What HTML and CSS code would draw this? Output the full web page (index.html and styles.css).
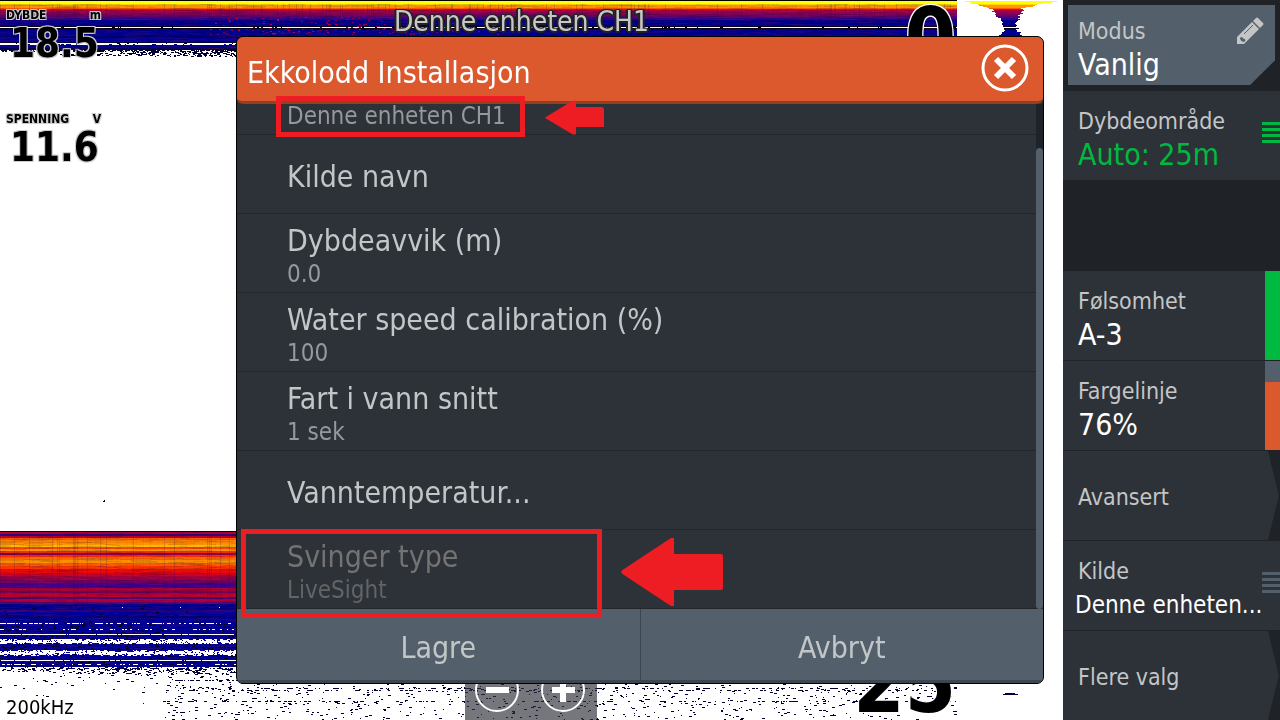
FILE: index.html
```
<!DOCTYPE html>
<html lang="nb">
<head>
  <meta charset="UTF-8">
  <meta name="viewport" content="width=device-width, initial-scale=1.0">
  <title>Ekkolodd Installasjon</title>
  <link rel="stylesheet" href="styles.css">
</head>
<body>
  <main class="sonar">
    <canvas class="echo" id="echo"></canvas>
    <h1 class="sonar-title">Denne enheten CH1</h1>
    <div class="readouts">
      <div class="readout">
        <div class="readout-head"><span>DYBDE</span><span>m</span></div>
        <div class="readout-value">18.5</div>
      </div>
      <div class="readout">
        <div class="readout-head"><span>SPENNING</span><span>V</span></div>
        <div class="readout-value">11.6</div>
      </div>
    </div>
    <div class="range range-top">0</div>
    <div class="range range-bottom">25</div>
    <div class="frequency">200kHz</div>
    <div class="zoom-bar">
      <button type="button" aria-label="Zoom ut">
        <svg width="46" height="46" viewBox="0 0 46 46"><circle cx="23" cy="23" r="21" fill="none" stroke="#fff" stroke-width="2"/><path d="M12 23h23" stroke="#fff" stroke-width="6"/></svg>
      </button>
      <button type="button" aria-label="Zoom inn">
        <svg width="46" height="46" viewBox="0 0 46 46"><circle cx="23" cy="23" r="21" fill="none" stroke="#fff" stroke-width="2"/><path d="M12 23h23M23 12v23" stroke="#fff" stroke-width="6"/></svg>
      </button>
    </div>
  </main>

  <aside class="menu">
    <div class="menu-cell">
      <button type="button" class="mode">
        <span class="label">Modus</span>
        <span class="value">Vanlig</span>
        <svg class="pencil" width="28" height="28" viewBox="0 0 28 28">
          <path d="M1 27v-7L16 5l7 7L8 27z" fill="#c3c6c7"/>
          <path d="M17 4l3-3q1-1 2 0l5 5q1 1 0 2l-3 3z" fill="#c3c6c7"/>
          <path d="M8 17l9-9" stroke="#53606b" stroke-width="1"/>
          <path d="M4 20.500q3-1 3 1 3 0 2 3-2 1-4-1-1-1-1-3z" fill="#53606b"/>
        </svg>
      </button>
    </div>
    <button type="button" class="menu-item auto">
      <span class="label">Dybdeområde</span>
      <span class="value">Auto: 25m</span>
      <span class="grip"></span>
    </button>
    <div class="menu-cell"></div>
    <button type="button" class="menu-item">
      <span class="label">Følsomhet</span>
      <span class="value">A-3</span>
      <span class="gauge gauge-green"></span>
    </button>
    <button type="button" class="menu-item">
      <span class="label">Fargelinje</span>
      <span class="value">76%</span>
      <span class="gauge"><span class="gauge-fill" style="height: 76%"></span></span>
    </button>
    <button type="button" class="menu-item more"><span class="label">Avansert</span></button>
    <button type="button" class="menu-item">
      <span class="label">Kilde</span>
      <span class="value value-long">Denne enheten...</span>
      <span class="grip"></span>
    </button>
    <button type="button" class="menu-item more"><span class="label">Flere valg</span></button>
  </aside>

  <div class="overlay">
    <section class="dialog" role="dialog" aria-labelledby="dialog-title">
      <header class="dialog-head">
        <h2 id="dialog-title">Ekkolodd Installasjon</h2>
        <button type="button" class="close" aria-label="Lukk">
          <svg width="48" height="48" viewBox="0 0 48 48"><circle cx="24" cy="24" r="22" fill="none" stroke="#fff" stroke-width="3"/><path d="M15 15l18 18M33 15L15 33" stroke="#fff" stroke-width="6"/></svg>
        </button>
      </header>
      <div class="dialog-body">
        <div class="rows">
          <div class="row row-cut">
            <span class="row-sub">Denne enheten CH1</span>
            <span class="mark mark-source"></span>
            <svg class="arrow arrow-source" width="59" height="35" viewBox="0 0 59 35"><path d="M0 17.500L27 1q3-1 4 0v6h25q3 0 3 3v17H31v7q-1 1-4 0L0 18z" fill="#ee1c23"/></svg>
          </div>
          <button type="button" class="row"><span class="row-name">Kilde navn</span></button>
          <button type="button" class="row"><span class="row-name">Dybdeavvik (m)</span><span class="row-sub">0.0</span></button>
          <button type="button" class="row"><span class="row-name">Water speed calibration (%)</span><span class="row-sub">100</span></button>
          <button type="button" class="row"><span class="row-name">Fart i vann snitt</span><span class="row-sub">1 sek</span></button>
          <button type="button" class="row"><span class="row-name">Vanntemperatur...</span></button>
          <div class="row-wrap">
            <button type="button" class="row" disabled><span class="row-name">Svinger type</span><span class="row-sub">LiveSight</span></button>
            <span class="mark mark-type"></span>
            <svg class="arrow arrow-type" width="102" height="68" viewBox="0 0 102 68"><path d="M0 34q1-2 3-3L50 0h3v16h47q2 0 2 2v32q0 2-2 2H53v16h-3L3 37q-2-1-3-3z" fill="#ee1c23"/></svg>
          </div>
        </div>
        <div class="scroll"><div class="scroll-thumb"></div></div>
      </div>
      <footer class="dialog-foot">
        <button type="button">Lagre</button>
        <button type="button">Avbryt</button>
      </footer>
    </section>
  </div>
  <script src="echo.js"></script>
</body>
</html>
```
FILE: styles.css
```
* { margin: 0; padding: 0; box-sizing: border-box; }
body { display: flex; height: 100vh; overflow: hidden; background: #fff; font-family: "DejaVu Sans Condensed", "DejaVu Sans", sans-serif; color: #c3c6c7; }
button { font: inherit; color: inherit; border: 0; background: none; text-align: left; }
svg { display: block; }

/* sonar picture */
.sonar { position: relative; flex: 1; min-width: 0; overflow: hidden; }
.echo { position: absolute; left: 0; top: 0; width: 100%; height: 100%; }
.sonar-title { position: absolute; left: 0; right: 20px; top: 4px; text-align: center; font-size: 28px; line-height: 36px; font-weight: 400; color: #c8c8c8; text-shadow: -1px -1px #222, 1px -1px #222, -1px 1px #222, 1px 1px #222, 0 2px #222, 2px 0 #222, -2px 0 #222; }
.readouts { position: absolute; left: 6px; top: 8px; width: 95px; display: grid; gap: 48px; color: #000; font-weight: 700; text-shadow: -1px -1px #ccc, 1px -1px #ccc, -1px 1px #ccc, 1px 1px #ccc; }
.readout-head { display: flex; justify-content: space-between; font-size: 12px; line-height: 14px; }
.readout-value { padding-left: 4px; font-size: 40px; line-height: 42px; }
.range { position: absolute; color: #000; font-weight: 700; font-size: 82px; line-height: 80px; text-shadow: -1px -1px #fff, 1px -1px #fff, -1px 1px #fff, 1px 1px #fff; }
.range-top { right: 107px; top: -2px; }
.range-bottom { right: 107px; bottom: -4px; }
.frequency { position: absolute; left: 6px; bottom: 0; color: #000; font-size: 20px; line-height: 26px; text-shadow: -1px -1px #fff, 1px 1px #fff, -1px 1px #fff, 1px -1px #fff; }
.zoom-bar { position: absolute; left: 50%; bottom: 0; margin-left: -67px; display: flex; height: 60px; background: rgba(46, 49, 56, 0.66); }
.zoom-bar button { width: 66px; padding: 7px 9px; }

/* right menu */
.menu { display: grid; grid-template-rows: repeat(8, 1fr); width: 217px; background: #1f2226; }
.menu-cell { padding: 5px; }
.menu-item { position: relative; display: flex; flex-direction: column; justify-content: center; padding: 6px 0 0 15px; background: #2d3138; border-top: 1px solid #1f2226; }
.label { font-size: 23px; line-height: 32px; }
.value { font-size: 30px; line-height: 36px; color: #fff; }
.value-long { margin-left: -3px; font-size: 24px; white-space: nowrap; }
.auto .value { color: #00b940; }
.mode { position: relative; display: flex; flex-direction: column; justify-content: center; width: 100%; height: 100%; padding: 8px 0 0 10px; background: #53606b; clip-path: polygon(0 0, 100% 0, 100% 69%, 88% 100%, 0 100%); }
.pencil { position: absolute; right: 11px; top: 12px; }
.gauge { position: absolute; right: 0; top: 0; bottom: 0; width: 15px; display: flex; align-items: flex-end; background: #53606b; }
.gauge-green { background: #00b940; }
.gauge-fill { width: 100%; background: #dc592d; }
.grip { position: absolute; right: 0; top: 31px; width: 18px; height: 23px; background: repeating-linear-gradient(#53606b 0 3px, transparent 3px 6px); }
.auto .grip { background: repeating-linear-gradient(#00b940 0 3px, transparent 3px 6px); }
.more { padding-top: 2px; }
.more::after { content: ""; position: absolute; right: 0; top: 0; bottom: 0; width: 12px; background: #1f2226; clip-path: polygon(0 0, 100% 0, 100% 100%, 0 100%, 90% 50%); }

/* dialog */
.overlay { position: fixed; inset: 0; display: flex; align-items: center; justify-content: center; pointer-events: none; }
.dialog { width: 63.125%; border: 1px solid #000; border-radius: 7px; background: #2d3138; overflow: hidden; pointer-events: auto; }
.dialog-head { display: flex; align-items: center; justify-content: space-between; height: 67px; padding: 0 14px 3px 10px; background: #dc592d; border-bottom: 3px solid #97401f; border-radius: 0 0 6px 6px; color: #fff; }
.dialog-head h2 { padding-top: 10px; font-size: 30px; line-height: 40px; font-weight: 400; }
.dialog-body { display: flex; }
.rows { flex: 1; }
.row { position: relative; display: flex; flex-direction: column; justify-content: center; width: 100%; height: 79px; padding: 6px 0 0 50px; border-bottom: 1px solid #23262a; }
.row-wrap { position: relative; }
.row-cut { height: 31px; padding-top: 0; padding-bottom: 6px; }
.row-name { font-size: 30px; line-height: 36px; }
.row-sub { font-size: 24px; line-height: 30px; color: #96999c; }
.row:disabled .row-name { color: #737373; }
.row:disabled .row-sub { color: #626466; }
.scroll { width: 7px; padding-top: 44px; background: #1f2226; }
.scroll-thumb { height: 100%; border-radius: 4px; background: #53606b; }
.dialog-foot { display: flex; border-bottom: 3px solid #3b464e; background: #53606b; }
.dialog-foot button { flex: 1; padding: 19px 0 12px; font-size: 30px; line-height: 40px; text-align: center; }
.dialog-foot button + button { border-left: 1px solid #3b464e; }

/* red pointers */
.mark { position: absolute; border: 5px solid #ee1c23; z-index: 1; }
.mark-source { left: 39px; top: -8px; width: 249px; height: 41px; }
.mark-type { left: 4px; top: -1px; width: 361px; height: 89px; }
.arrow { position: absolute; z-index: 1; }
.arrow-source { left: 308px; top: -4px; }
.arrow-type { left: 384px; top: 8px; }
```
FILE: echo.js
```
var canvas = document.getElementById('echo');
var ctx = canvas.getContext('2d');
var w = canvas.width = canvas.clientWidth;
var h = canvas.height = canvas.clientHeight;
var edge = w - 106;   // right end of the scrolling history

// fixed seed, so the picture is the same on every load
var seed = 7;
function rnd() {
  seed = (seed * 48271) % 2147483647;
  return seed / 2147483647;
}

// [first row, color] until the next entry
var surface = [
  [0, '#000000'], [1, '#ffff00'], [4, '#ffd800'], [5, '#ff9800'], [8, '#ff5800'], [9, '#e01010'],
  [10, '#b0003c'], [12, '#900050'], [14, '#780058'], [16, '#580070'], [18, '#300088'],
  [20, '#000090'], [26, '#000020'], [27, '#ffffff'], [28, '#000010'], [29, '#000090'],
  [36, '#000070'], [38, '#000098'], [42, '#000030'], [43, '#ffffff'], [45, '#000090'], [48, '#000058'], [50, '']
];
var bottom = [
  [531, '#000000'], [532, '#b00030'], [534, '#300080'], [536, '#c00020'], [538, '#ff6000'],
  [540, '#ff8800'], [543, '#ff9c00'], [545, '#ffc000'], [547, '#ff4800'], [549, '#ff9c00'],
  [551, '#f03000'], [553, '#900050'], [555, '#ff3000'], [557, '#ff7000'], [560, '#ff9400'],
  [563, '#ff6000'], [566, '#ff3800'], [569, '#f00808'], [573, '#d00020'], [576, '#a00040'],
  [580, '#700060'], [583, '#400090'], [588, '#a80038'], [591, '#700058'], [593, '#b80030'],
  [597, '#500070'], [599, '#b00038'], [602, '#600070'], [604, '#000090'], [610, '#280080'],
  [612, '#0000a0'], [616, '#000078'], [618, '#000098'], [668, '']
];

var columns = [];
for (var x = 0; x < edge; x++) {
  columns[x] = rnd() < 0.08 ? 0.2 : rnd() * 0.06;
}

function band(list) {
  for (var i = 0; i < list.length - 1; i++) {
    for (var y = list[i][0]; y < list[i + 1][0]; y++) {
      ctx.fillStyle = list[i][1];
      ctx.fillRect(0, y, edge, 1);
      if (list[i][1] == '#ffffff' || y < 4) continue;
      // streaks along the row
      for (var x = 0; x < edge; x += 3 + rnd() * 30) {
        ctx.fillStyle = rnd() < 0.5 ? 'rgba(0,0,60,0.1)' : 'rgba(255,60,0,0.06)';
        ctx.fillRect(x | 0, y, 4 + rnd() * 25 | 0, 1);
      }
    }
  }
}

// broken dots over one row
function dots(y, chance, color, from) {
  ctx.fillStyle = color;
  for (var x = from || 0; x < edge; x++) {
    if (rnd() < chance) ctx.fillRect(x, y, 1 + rnd() * 3 | 0, 1);
  }
}

ctx.fillStyle = '#fff';
ctx.fillRect(0, 0, w, h);
band(surface);
band(bottom);

for (x = 0; x < edge; x++) {
  ctx.fillStyle = 'rgba(60,0,80,' + columns[x] + ')';
  ctx.fillRect(x, 4, 1, 20);
  ctx.fillRect(x, 534, 1, 70);
}

dots(27, 0.04, '#000');
dots(43, 0.04, '#000');
dots(44, 0.1, '#000080');
dots(50, 0.4, '#000020');
dots(51, 0.3, '#000020');
dots(52, 0.25, '#000040', 120);
dots(53, 0.3, '#000040', 100);
dots(54, 0.25, '#000030', 60);
dots(55, 0.25, '#000030', 60);
dots(56, 0.2, '#000030', 150);
dots(60, 0.01, '#000030', 100);
dots(65, 0.01, '#000030', 10);

// red specks under the surface
for (var i = 0; i < 160; i++) {
  ctx.fillStyle = rnd() < 0.7 ? '#800050' : '#c00030';
  ctx.fillRect(210 + rnd() * 290 | 0, 17 + rnd() * 18 | 0, 2, 1);
}

// echo falling apart below the sea bed: share of white for each row
for (var y = 605; y < 668; y++) {
  dots(y, y < 622 ? 0.01 : 0.06, '#000030');
}
var gaps = { 607: 0.01, 623: 0.3, 629: 0.15, 634: 0.8, 639: 0.3, 640: 0.6, 641: 0.8, 642: 0.7, 643: 0.3, 650: 0.2, 651: 0.5, 652: 0.7, 653: 0.7, 654: 0.4, 655: 0.15, 660: 0.8, 664: 0.2, 667: 0.5 };
for (y in gaps) {
  dots(+y, gaps[y], '#fff');
}
for (y = 668; y < 676; y++) {
  dots(y, 0.3 - (y - 668) * 0.04, '#000040', y > 671 ? 50 : 0);
}
for (y = 676; y < h; y++) {
  var line = y == 680 || y == 688 || y == 690 || y == 701;
  dots(y, line ? 0.16 : 0.02, '#000030', 163);
  dots(y, y < 692 ? 0.008 : 0.001, '#000030');
}
ctx.fillStyle = '#000';
ctx.fillRect(103, 501, 2, 1);
ctx.fillRect(104, 500, 1, 1);

// white gap right of the history
ctx.fillStyle = '#fff';
ctx.fillRect(edge, 0, w - edge, h);

// live column, [row, left, right] narrowing with depth
var cone = [[1, 0, 93], [2, 4, 88], [3, 7, 80], [4, 12, 74], [5, 14, 72], [6, 18, 70], [7, 22, 62], [8, 25, 60], [9, 28, 60], [12, 30, 58], [15, 32, 57], [18, 36, 56], [21, 38, 54], [29, 40, 54], [32, 36, 56], [35, 34, 59], [37, 34, 59]];
for (i = 0; i < cone.length - 1; i++) {
  for (y = cone[i][0]; y < cone[i + 1][0]; y++) {
    var k = 0;
    while (surface[k + 1][0] <= y) k++;
    ctx.fillStyle = surface[k][1];
    ctx.fillRect(edge + 7 + cone[i][1] + rnd() * 3 | 0, y, cone[i][2] - cone[i][1] - rnd() * 3 | 0, 1);
  }
}
ctx.fillStyle = '#000040';
ctx.fillRect(edge + 46, 694, 15, 1);
ctx.fillRect(edge + 48, 693, 10, 1);
```
